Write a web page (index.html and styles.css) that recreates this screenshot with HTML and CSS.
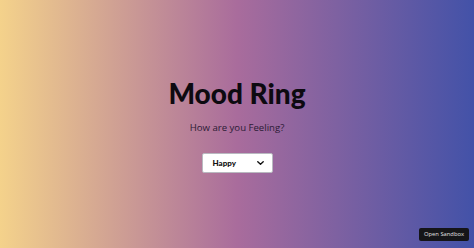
FILE: index.html
```html
<!DOCTYPE html>
<html>
<head>
<meta charset="utf-8">
<link rel="stylesheet" href="styles.css">
</head>
<body>
<main class="app">
  <h1 class="title">Mood Ring</h1>
  <p class="subtitle">How are you Feeling?</p>
  <div class="select">
    <span class="select-value">Happy</span>
    <svg class="chevron" width="7" height="4" viewBox="0 0 7 4"><path d="M0.8 0.8 L3.5 3.2 L6.2 0.8" fill="none" stroke="#111" stroke-width="1.4" stroke-linecap="round" stroke-linejoin="round"/></svg>
  </div>
</main>
<a class="sandbox-btn">Open Sandbox</a>
</body>
</html>
```

FILE: styles.css
```css
html, body {
  margin: 0;
  padding: 0;
  height: 100%;
}
body {
  background: linear-gradient(to right, #f4d28b 0%, #a96c9c 50%, #4352a8 100%);
  font-family: "Open Sans", sans-serif;
  overflow: hidden;
}
.app {
  height: 100%;
  display: flex;
  flex-direction: column;
  align-items: center;
  padding-top: 76px;
  box-sizing: border-box;
}
.title {
  margin: 0;
  font-family: Lato, sans-serif;
  font-weight: 900;
  font-size: 28px;
  line-height: 34px;
  color: #0d0a10;
}
.subtitle {
  margin: 11px 0 0;
  font-size: 9.6px;
  line-height: 14px;
  color: #2b1a35;
}
.select {
  margin-top: 18px;
  width: 71px;
  height: 20px;
  box-sizing: border-box;
  background: #fff;
  border: 1px solid #b9b9c0;
  border-radius: 2px;
  display: flex;
  align-items: center;
  justify-content: space-between;
  padding: 0 8px 0 10px;
}
.select-value {
  font-family: Lato, sans-serif;
  font-weight: 900;
  font-size: 8px;
  color: #111;
}
.chevron {
  display: block;
}
.sandbox-btn {
  position: fixed;
  right: 5px;
  bottom: 7px;
  background: #151518;
  color: #e2e2e2;
  font-family: "Open Sans", sans-serif;
  font-size: 5.8px;
  line-height: 13px;
  padding: 0 5px;
  border-radius: 2px;
}
```
